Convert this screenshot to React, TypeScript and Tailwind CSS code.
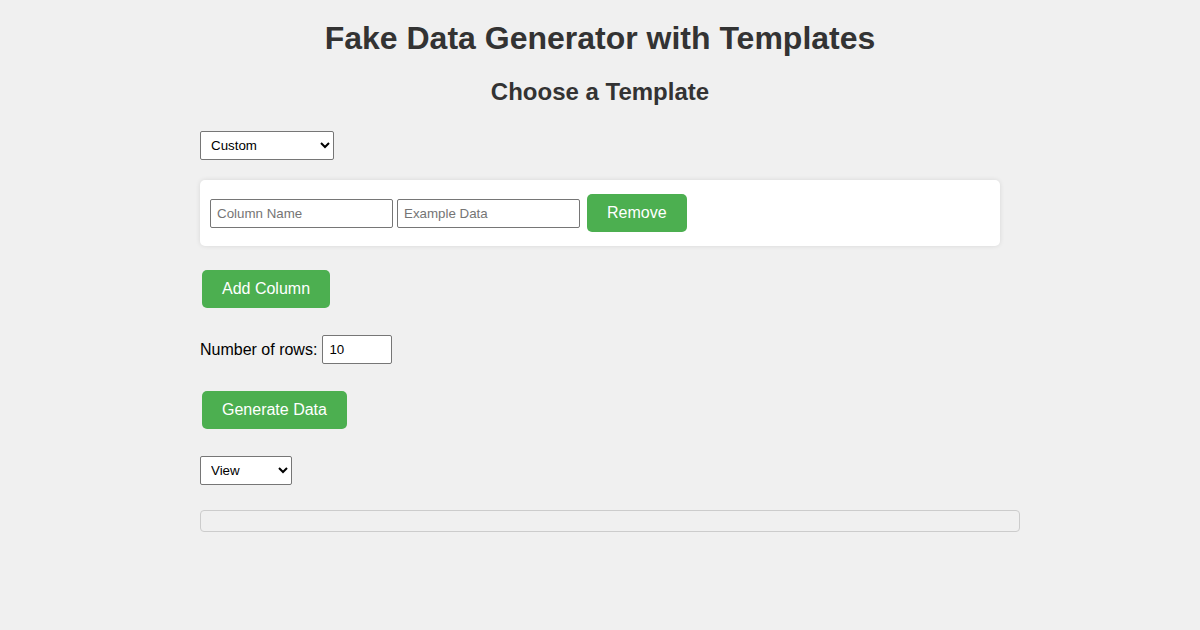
import React from "react";

export default function App() {
  const btn =
    "bg-[#4CAF50] text-white text-[16px] leading-[18px] py-[10px] px-[20px] rounded-[5px] cursor-pointer";
  const field =
    "h-[29px] border border-[#767676] rounded-[2px] bg-white text-[13.33px] text-black px-[6px] outline-none placeholder:text-[#757575]";
  return (
    <div
      className="min-h-[630px] bg-[#f0f0f0] pt-[20px]"
      style={{ fontFamily: '"Liberation Sans", Arial, sans-serif' }}
    >
      <div className="w-[800px] mx-auto flex flex-col items-start">
        <h1 className="self-stretch text-center text-[32px] leading-[37px] font-bold text-[#333]">
          Fake Data Generator with Templates
        </h1>
        <h2 className="self-stretch mt-[21px] text-center text-[24px] leading-[28px] font-bold text-[#333]">
          Choose a Template
        </h2>
        <select
          className="mt-[25px] w-[134px] h-[29px] border border-[#767676] rounded-[2px] bg-white text-[13.33px] text-black pl-[6px]"
          defaultValue="Custom"
        >
          <option>Custom</option>
          <option>Users</option>
          <option>Products</option>
        </select>

        <div className="mt-[20px] self-stretch bg-white rounded-[5px] p-[10px] shadow-[0_0_5px_rgba(0,0,0,0.1)]">
          <div className="h-[46px] flex items-center">
            <input className={`${field} w-[183px]`} placeholder="Column Name" />
            <input className={`${field} w-[183px] ml-[4px]`} placeholder="Example Data" />
            <button className={`${btn} ml-[7px]`}>Remove</button>
          </div>
        </div>

        <button className={`${btn} mt-[24px] ml-[2px]`}>Add Column</button>

        <div className="mt-[27px] h-[29px] flex items-center">
          <label className="text-[16px] text-black">Number of rows:</label>
          <input className={`${field} w-[70px] ml-[5px]`} defaultValue="10" />
        </div>

        <button className={`${btn} mt-[27px] ml-[2px]`}>Generate Data</button>

        <select
          className="mt-[27px] w-[92px] h-[29px] border border-[#767676] rounded-[2px] bg-white text-[13.33px] text-black pl-[6px]"
          defaultValue="View"
        >
          <option>View</option>
          <option>CSV</option>
          <option>JSON</option>
        </select>

        <div className="mt-[25px] w-[820px] h-[22px] border border-[#ccc] rounded-[4px]" />
      </div>
    </div>
  );
}
